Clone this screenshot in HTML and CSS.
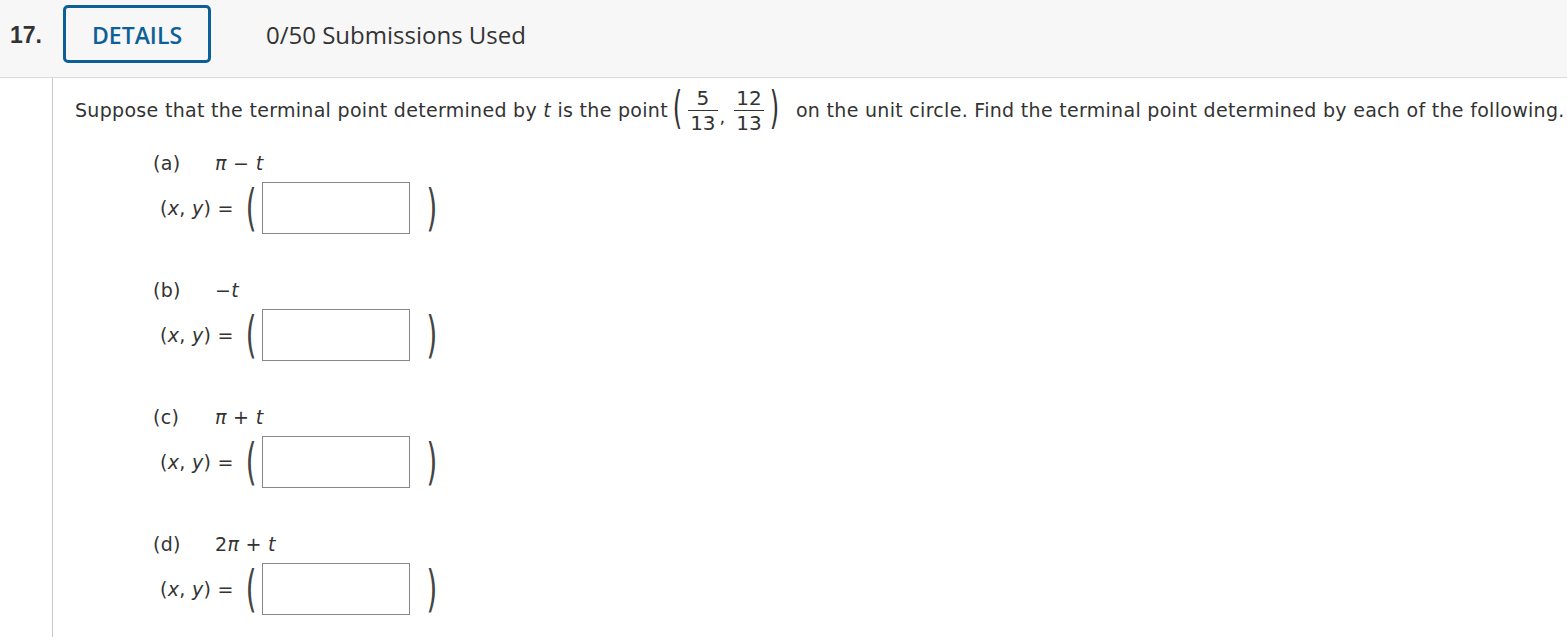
FILE: index.html
```html
<!DOCTYPE html>
<html>
<head>
<meta charset="utf-8">
<link rel="stylesheet" href="styles.css">
</head>
<body>
<div class="header">
  <div class="qnum">17.</div>
  <div class="details">DETAILS</div>
  <div class="subs">0/50 Submissions Used</div>
</div>
<div class="main">
  <div class="content">
    <div class="question">
      <span>Suppose that the terminal point determined by <i>t</i> is the point</span>
      <span class="pt">
        <span class="bigp fp">(</span>
        <span class="frac"><span class="num">5</span><span class="den">13</span></span>
        <span class="comma">,</span>
        <span class="frac"><span class="num">12</span><span class="den">13</span></span>
        <span class="bigp fp">)</span>
      </span>
      <span>on the unit circle. Find the terminal point determined by each of the following.</span>
    </div>

    <div class="part">
      <div class="plabel"><span class="pl">(a)</span><span class="expr"><i>π</i> − <i>t</i></span></div>
      <div class="answer"><span class="xy">(<i>x</i>, <i>y</i>) =</span><span class="bigp lp">(</span><span class="box"></span><span class="bigp rp">)</span></div>
    </div>
    <div class="part">
      <div class="plabel"><span class="pl">(b)</span><span class="expr">−<i>t</i></span></div>
      <div class="answer"><span class="xy">(<i>x</i>, <i>y</i>) =</span><span class="bigp lp">(</span><span class="box"></span><span class="bigp rp">)</span></div>
    </div>
    <div class="part">
      <div class="plabel"><span class="pl">(c)</span><span class="expr"><i>π</i> + <i>t</i></span></div>
      <div class="answer"><span class="xy">(<i>x</i>, <i>y</i>) =</span><span class="bigp lp">(</span><span class="box"></span><span class="bigp rp">)</span></div>
    </div>
    <div class="part">
      <div class="plabel"><span class="pl">(d)</span><span class="expr">2<i>π</i> + <i>t</i></span></div>
      <div class="answer"><span class="xy">(<i>x</i>, <i>y</i>) =</span><span class="bigp lp">(</span><span class="box"></span><span class="bigp rp">)</span></div>
    </div>
  </div>
</div>
</body>
</html>
```

FILE: styles.css
```css
html, body {
  margin: 0;
  padding: 0;
  background: #ffffff;
}
body {
  font-family: "DejaVu Sans", Verdana, sans-serif;
  color: #333333;
  overflow: hidden;
}
.header {
  height: 77px;
  background: #f7f7f7;
  border-bottom: 1px solid #dcdcdc;
  display: flex;
  align-items: center;
}
.qnum {
  font-family: "Liberation Sans", Arial, sans-serif;
  font-weight: bold;
  font-size: 23px;
  color: #333;
  padding-left: 10px;
  width: 53px;
  margin-top: -6px;
}
.details {
  box-sizing: border-box;
  width: 148px;
  height: 58px;
  margin-top: -9px;
  border: 3px solid #0d5f98;
  border-radius: 5px;
  color: #0d5f98;
  font-family: "Open Sans", sans-serif;
  font-weight: 600;
  font-size: 23px;
  display: flex;
  align-items: center;
  justify-content: center;
  padding-top: 1px;
}
.subs {
  font-family: "Open Sans", sans-serif;
  font-size: 24px;
  color: #333;
  margin-left: 55px;
  margin-top: -9px;
}
.main {
  padding-left: 52px;
}
.content {
  border-left: 1px solid #c8c8c8;
  padding-left: 22px;
  height: 560px;
  font-size: 19px;
  letter-spacing: 0.3px;
  white-space: nowrap;
}
.question {
  display: flex;
  align-items: center;
  height: 46px;
  padding-top: 9px;
  margin-bottom: 17px;
}
.pt {
  display: inline-flex;
  align-items: center;
  margin: 0 13px 0 1px;
  letter-spacing: 0;
}
.bigp {
  font-family: "DejaVu Sans", sans-serif;
  font-weight: normal;
  line-height: 1;
  display: inline-block;
  letter-spacing: 0;
}
.fp {
  font-size: 44px;
  transform: scaleX(0.55);
  margin-top: -4px;
}
.frac {
  display: inline-flex;
  flex-direction: column;
  align-items: center;
  font-size: 20px;
  line-height: 22px;
  margin: 0 2px;
}
.num {
  border-bottom: 1px solid #333;
  padding: 0 2px 1px;
  align-self: stretch;
  text-align: center;
}
.den {
  padding: 1px 2px 0;
}
.comma {
  align-self: center;
  margin: 14px 7px 0 0;
  line-height: 18px;
  font-size: 18px;
}
.part {
  margin-left: 78px;
  margin-bottom: 43px;
}
.plabel {
  height: 26px;
  line-height: 26px;
  display: flex;
}
.pl {
  width: 62px;
}
.answer {
  display: flex;
  align-items: center;
  margin-top: 6px;
  padding-left: 7px;
  height: 52px;
}
.xy {
  width: 81px;
}
.lp, .rp {
  font-size: 50px;
  transform: scaleX(0.55);
  color: #444;
}
.lp {
  width: 21px;
}
.rp {
  margin-left: 12px;
}
.box {
  box-sizing: border-box;
  width: 148px;
  height: 52px;
  border: 1px solid #888;
  background: #fff;
}
```
